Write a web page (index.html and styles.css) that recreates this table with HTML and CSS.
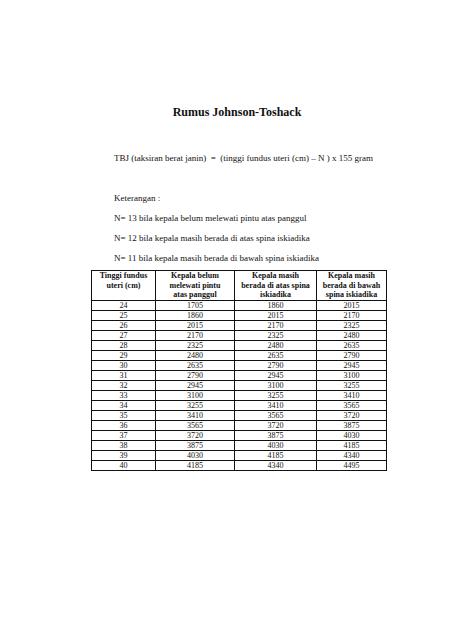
FILE: index.html
```html
<!DOCTYPE html>
<html>
<head>
<meta charset="utf-8">
<link rel="stylesheet" href="styles.css">
</head>
<body>
<div class="page">
  <h1 class="title">Rumus Johnson-Toshack</h1>
  <p class="line formula">TBJ (taksiran berat janin) &nbsp;= &nbsp;(tinggi fundus uteri (cm) – N ) x 155 gram</p>
  <p class="line ket">Keterangan :</p>
  <p class="line">N= 13 bila kepala belum melewati pintu atas panggul</p>
  <p class="line">N= 12 bila kepala masih berada di atas spina iskiadika</p>
  <p class="line">N= 11 bila kepala masih berada di bawah spina iskiadika</p>
  <table class="tbl">
    <thead>
      <tr>
        <th class="c1">Tinggi fundus<br>uteri (cm)</th>
        <th class="c2">Kepala belum<br>melewati pintu<br>atas panggul</th>
        <th class="c3">Kepala masih<br>berada di atas spina<br>iskiadika</th>
        <th class="c4">Kepala masih<br>berada di bawah<br>spina iskiadika</th>
      </tr>
    </thead>
    <tbody>
      <tr><td>24</td><td>1705</td><td>1860</td><td>2015</td></tr>
      <tr><td>25</td><td>1860</td><td>2015</td><td>2170</td></tr>
      <tr><td>26</td><td>2015</td><td>2170</td><td>2325</td></tr>
      <tr><td>27</td><td>2170</td><td>2325</td><td>2480</td></tr>
      <tr><td>28</td><td>2325</td><td>2480</td><td>2635</td></tr>
      <tr><td>29</td><td>2480</td><td>2635</td><td>2790</td></tr>
      <tr><td>30</td><td>2635</td><td>2790</td><td>2945</td></tr>
      <tr><td>31</td><td>2790</td><td>2945</td><td>3100</td></tr>
      <tr><td>32</td><td>2945</td><td>3100</td><td>3255</td></tr>
      <tr><td>33</td><td>3100</td><td>3255</td><td>3410</td></tr>
      <tr><td>34</td><td>3255</td><td>3410</td><td>3565</td></tr>
      <tr><td>35</td><td>3410</td><td>3565</td><td>3720</td></tr>
      <tr><td>36</td><td>3565</td><td>3720</td><td>3875</td></tr>
      <tr><td>37</td><td>3720</td><td>3875</td><td>4030</td></tr>
      <tr><td>38</td><td>3875</td><td>4030</td><td>4185</td></tr>
      <tr><td>39</td><td>4030</td><td>4185</td><td>4340</td></tr>
      <tr><td>40</td><td>4185</td><td>4340</td><td>4495</td></tr>
    </tbody>
  </table>
</div>
</body>
</html>
```

FILE: styles.css
```css
html, body {
  margin: 0;
  padding: 0;
  background: #ffffff;
}
body {
  font-family: "Liberation Serif", "Times New Roman", serif;
  color: #111111;
}
.page {
  width: 453px;
  height: 640px;
  padding-top: 104px;
  box-sizing: border-box;
}
.title {
  margin: 0 93px 0 114px;
  font-size: 12px;
  line-height: 16px;
  font-weight: bold;
  text-align: center;
}
.line {
  margin: 0 0 0 114px;
  font-size: 9px;
  line-height: 20px;
  height: 20px;
  white-space: nowrap;
}
.formula {
  margin-top: 28px;
}
.ket {
  margin-top: 20px;
}
.tbl {
  margin: 2px 0 0 91px;
  border-collapse: collapse;
  font-size: 8px;
  table-layout: fixed;
  width: 291px;
}
.tbl th, .tbl td {
  border: 1px solid #111111;
  padding: 0;
  text-align: center;
  vertical-align: middle;
}
.tbl th {
  font-weight: bold;
  line-height: 9.67px;
  white-space: nowrap;
  vertical-align: top;
}
.tbl td {
  line-height: 9px;
  height: 9px;
}
.c1 { width: 63px; }
.c2 { width: 78px; }
.c3 { width: 81px; }
.c4 { width: 69px; }
```
